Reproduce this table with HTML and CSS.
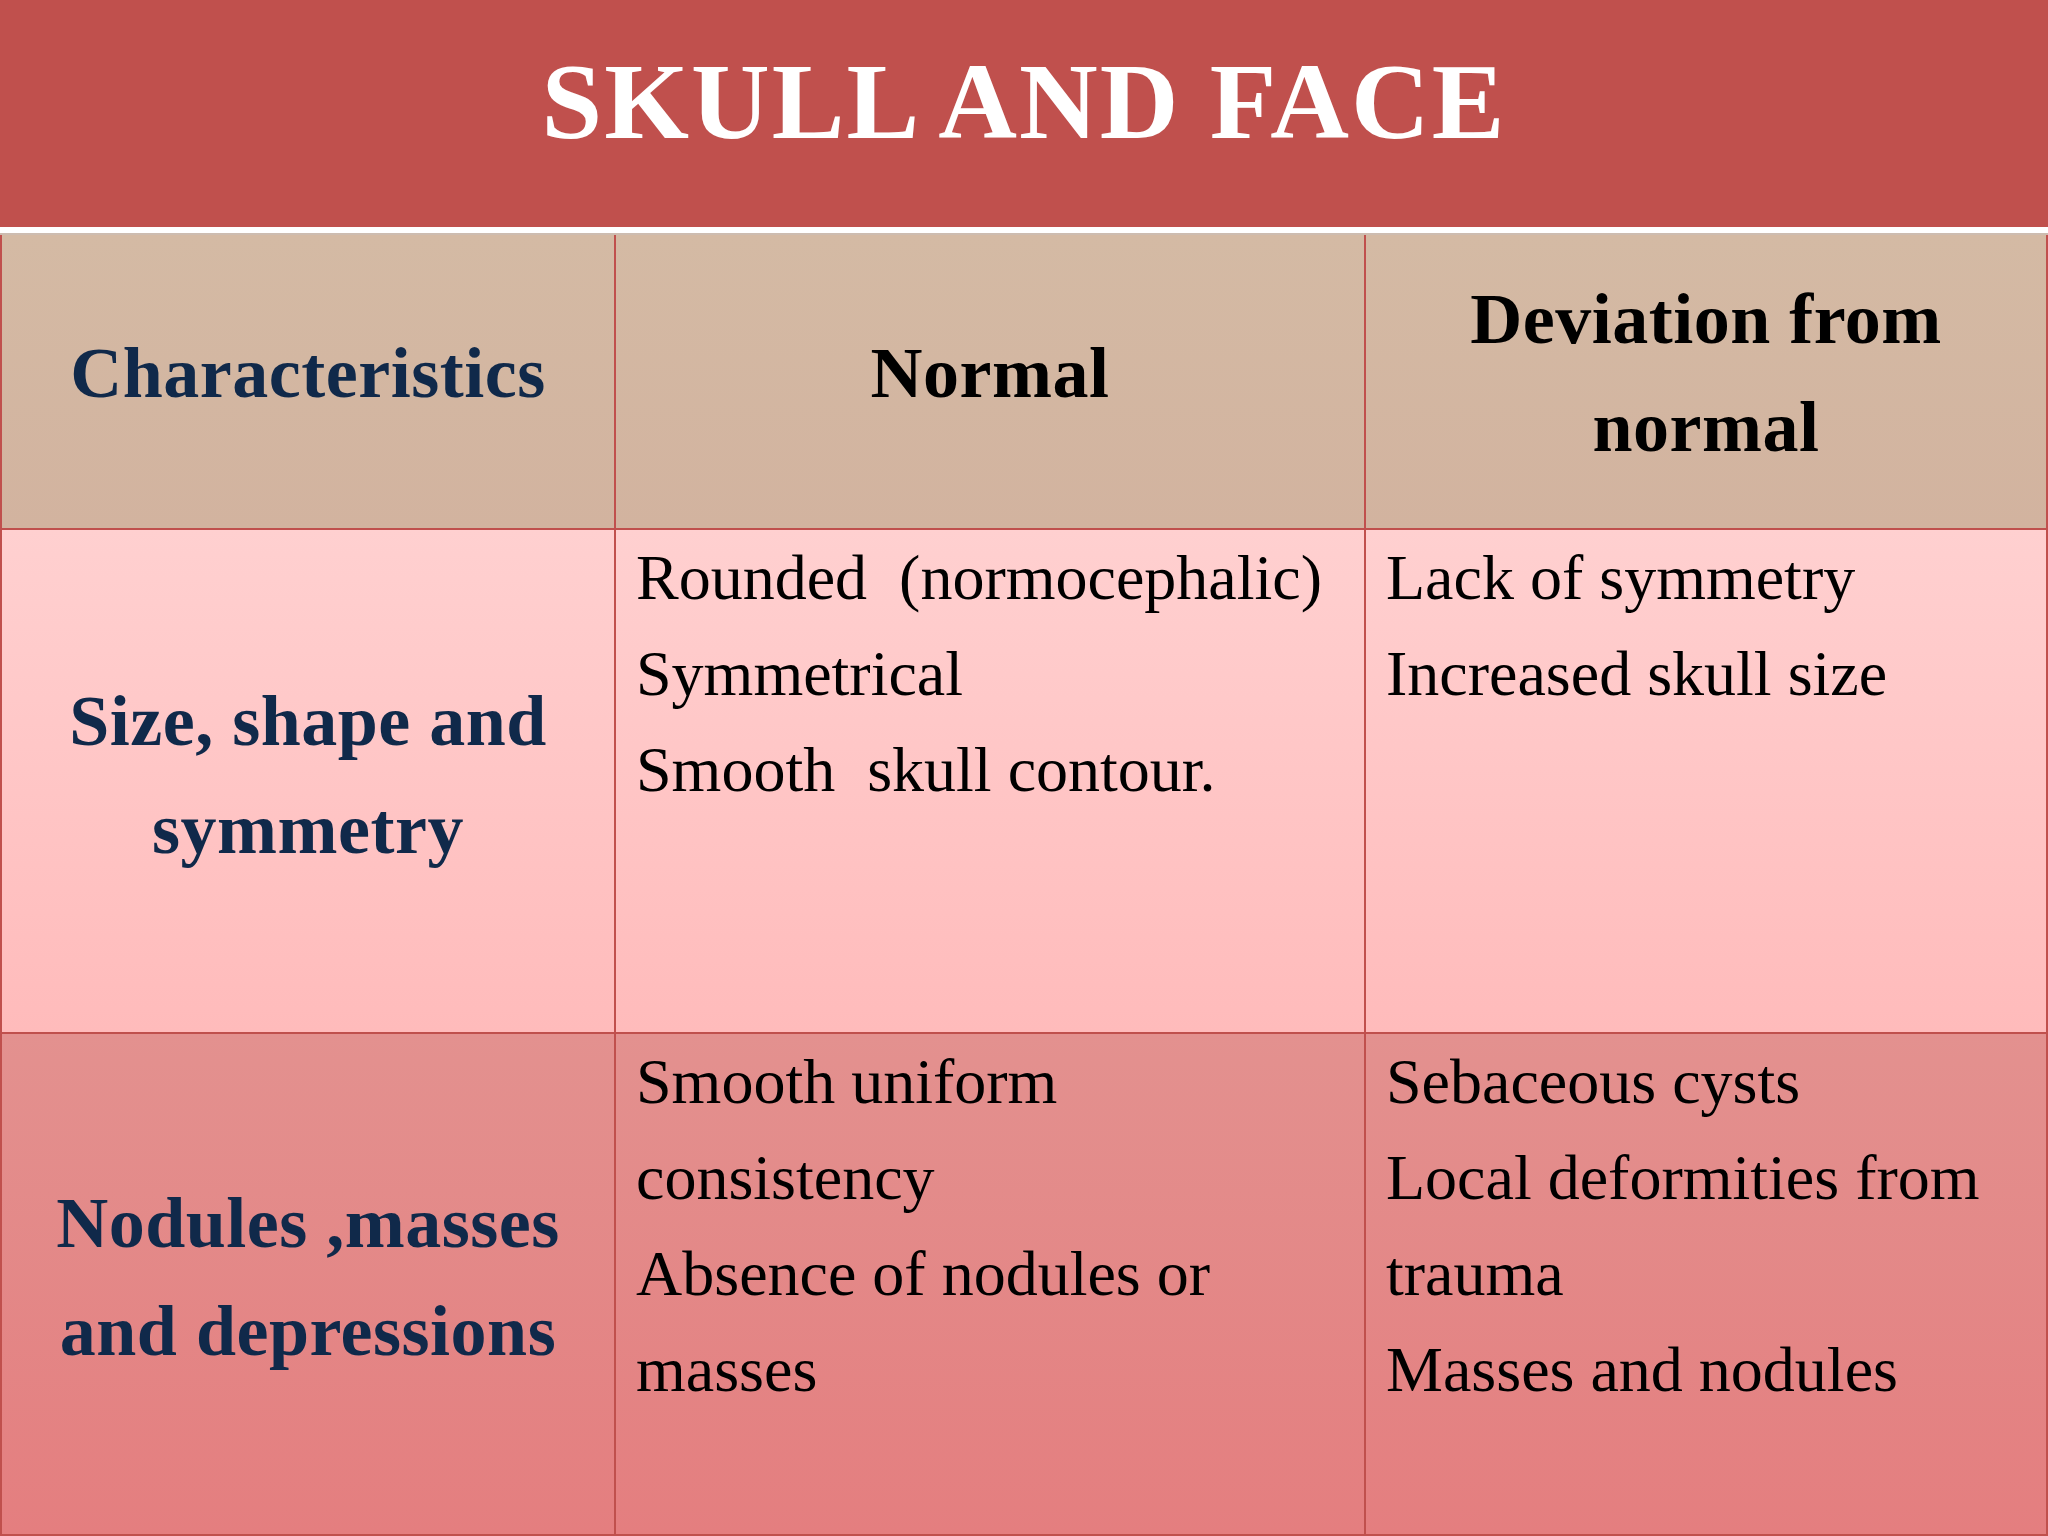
FILE: index.html
```html
<!DOCTYPE html>
<html>
<head>
<meta charset="utf-8">
<title>Skull and Face</title>
<link rel="stylesheet" href="styles.css">
</head>
<body>
<div class="slide">
  <div class="title">SKULL AND FACE</div>
  <div class="stripe"></div>
  <div class="rule"></div>
  <div class="table">
    <div class="cell head char"><span>Characteristics</span></div>
    <div class="cell head"><span>Normal</span></div>
    <div class="cell head"><span>Deviation from<br>normal</span></div>

    <div class="cell r1 char"><span>Size, shape and<br>symmetry</span></div>
    <div class="cell r1 body">
      <p>Rounded&nbsp; (normocephalic)</p>
      <p>Symmetrical</p>
      <p>Smooth&nbsp; skull contour.</p>
    </div>
    <div class="cell r1 body">
      <p>Lack of symmetry</p>
      <p>Increased skull size</p>
    </div>

    <div class="cell r2 char"><span>Nodules ,masses<br>and depressions</span></div>
    <div class="cell r2 body">
      <p>Smooth uniform consistency</p>
      <p>Absence of nodules or masses</p>
    </div>
    <div class="cell r2 body">
      <p>Sebaceous cysts</p>
      <p>Local deformities from trauma</p>
      <p>Masses and nodules</p>
    </div>
  </div>
</div>
</body>
</html>
```
FILE: styles.css
```css
html, body {
  margin: 0;
  padding: 0;
  background: #ffffff;
}

.slide {
  width: 2048px;
  height: 1536px;
  display: flex;
  flex-direction: column;
  font-family: "Liberation Serif", "Times New Roman", serif;
  overflow: hidden;
}

.title {
  height: 227px;
  box-sizing: border-box;
  padding-top: 47px;
  background: #C0504D;
  color: #ffffff;
  font-weight: bold;
  font-size: 109px;
  line-height: 109px;
  letter-spacing: 2px;
  text-align: center;
}

.stripe {
  height: 6px;
  background: #ffffff;
}

.rule {
  height: 2px;
  background: #cdbcb0;
}

.table {
  flex: 1;
  display: grid;
  grid-template-columns: 612px 748px 1fr;
  grid-template-rows: 293px 502px 500px;
  gap: 2px;
  padding: 0 2px 2px 2px;
  background: #C0504D;
}

.cell {
  box-sizing: border-box;
}

.head {
  background: linear-gradient(#D4BAA4, #D2B39F);
  display: flex;
  align-items: center;
  justify-content: center;
  text-align: center;
  font-weight: bold;
  font-size: 72px;
  line-height: 108px;
  letter-spacing: 0.5px;
  color: #000000;
  padding-bottom: 17px;
}

.char {
  display: flex;
  align-items: center;
  justify-content: center;
  text-align: center;
  font-weight: bold;
  font-size: 72px;
  line-height: 108px;
  letter-spacing: 0.5px;
  color: #10294A;
}

.r1 {
  background: linear-gradient(#FFD0D0, #FFBBBB);
}

.r2 {
  background: linear-gradient(#E3918F, #E47E7F);
}

.r1.char {
  padding-bottom: 12px;
}

.r2.char {
  padding-bottom: 14px;
}

.head.char {
  padding-bottom: 17px;
}

.body {
  padding: 0 22px 0 20px;
  font-size: 64px;
  line-height: 96px;
  color: #000000;
}

.body p {
  margin: 0;
}
```
